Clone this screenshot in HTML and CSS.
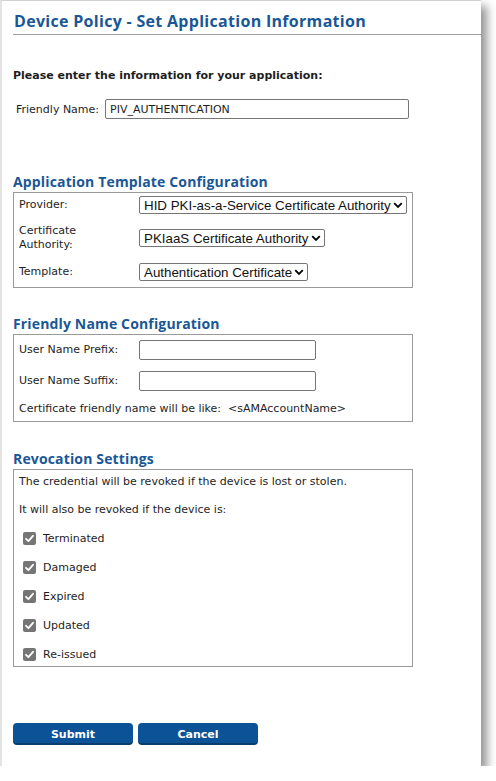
FILE: index.html
```html
<!DOCTYPE html>
<html>
<head>
<meta charset="utf-8">
<link rel="stylesheet" href="styles.css">
</head>
<body>
<div class="frame">
  <h1 class="title">Device Policy - Set Application Information</h1>
  <div class="content">
    <p class="intro">Please enter the information for your application:</p>
    <div class="name-row">
      <label class="name-label">Friendly Name:</label>
      <input class="text-input wide" type="text" value="PIV_AUTHENTICATION">
    </div>

    <h2 class="section-title s-template">Application Template Configuration</h2>
    <div class="box box-template">
      <div class="row r1">
        <span class="lbl">Provider:</span>
        <select class="sel sel-provider"><option>HID PKI-as-a-Service Certificate Authority</option></select>
      </div>
      <div class="row r2">
        <span class="lbl">Certificate<br>Authority:</span>
        <select class="sel sel-ca"><option>PKIaaS Certificate Authority</option></select>
      </div>
      <div class="row r3">
        <span class="lbl">Template:</span>
        <select class="sel sel-template"><option>Authentication Certificate</option></select>
      </div>
    </div>

    <h2 class="section-title s-friendly">Friendly Name Configuration</h2>
    <div class="box box-friendly">
      <div class="row">
        <span class="lbl">User Name Prefix:</span>
        <input class="text-input short" type="text">
      </div>
      <div class="row">
        <span class="lbl">User Name Suffix:</span>
        <input class="text-input short" type="text">
      </div>
      <div class="line">Certificate friendly name will be like:&nbsp;&nbsp;&lt;sAMAccountName&gt;</div>
    </div>

    <h2 class="section-title s-revoke">Revocation Settings</h2>
    <div class="box box-revoke">
      <div class="line">The credential will be revoked if the device is lost or stolen.</div>
      <div class="line">It will also be revoked if the device is:</div>
      <div class="check"><span class="cb"><svg viewBox="0 0 13 13" width="13" height="13"><path d="M3 6.8 L5.4 9.2 L10 3.8" fill="none" stroke="#fff" stroke-width="1.8" stroke-linecap="round" stroke-linejoin="round"/></svg></span>Terminated</div>
      <div class="check"><span class="cb"><svg viewBox="0 0 13 13" width="13" height="13"><path d="M3 6.8 L5.4 9.2 L10 3.8" fill="none" stroke="#fff" stroke-width="1.8" stroke-linecap="round" stroke-linejoin="round"/></svg></span>Damaged</div>
      <div class="check"><span class="cb"><svg viewBox="0 0 13 13" width="13" height="13"><path d="M3 6.8 L5.4 9.2 L10 3.8" fill="none" stroke="#fff" stroke-width="1.8" stroke-linecap="round" stroke-linejoin="round"/></svg></span>Expired</div>
      <div class="check"><span class="cb"><svg viewBox="0 0 13 13" width="13" height="13"><path d="M3 6.8 L5.4 9.2 L10 3.8" fill="none" stroke="#fff" stroke-width="1.8" stroke-linecap="round" stroke-linejoin="round"/></svg></span>Updated</div>
      <div class="check"><span class="cb"><svg viewBox="0 0 13 13" width="13" height="13"><path d="M3 6.8 L5.4 9.2 L10 3.8" fill="none" stroke="#fff" stroke-width="1.8" stroke-linecap="round" stroke-linejoin="round"/></svg></span>Re-issued</div>
    </div>

    <div class="buttons">
      <button class="btn">Submit</button>
      <button class="btn">Cancel</button>
    </div>
  </div>
</div>
</body>
</html>
```

FILE: styles.css
```css
html, body {
  margin: 0;
  padding: 0;
  background: #ffffff;
}
body {
  font-family: "DejaVu Sans", sans-serif;
  font-size: 11px;
  color: #1e1e1e;
}
.frame {
  box-sizing: border-box;
  width: 481px;
  height: 766px;
  background: #ffffff;
  border-top: 1px solid #d2d2d2;
  border-left: 2px solid #e4e4e4;
  box-shadow: 6px 6px 9px rgba(0, 0, 0, 0.42);
}
.title {
  margin: 0 0 0 11px;
  padding: 10px 0 3px 1px;
  font-family: "Open Sans", sans-serif;
  font-weight: 700;
  font-size: 16px;
  line-height: 20px;
  letter-spacing: 0.3px;
  color: #1a5796;
  border-bottom: 1px solid #9e9e9e;
}
.content {
  padding-left: 11px;
}
.intro {
  margin: 34px 0 0 0;
  font-weight: 700;
  line-height: 14px;
}
.name-row {
  display: flex;
  align-items: center;
  margin-top: 16px;
  padding-left: 3px;
}
.name-label {
  width: 89px;
}
.text-input {
  box-sizing: border-box;
  height: 20px;
  border: 1px solid #767676;
  border-radius: 2px;
  padding: 0 4px;
  font-family: "DejaVu Sans", sans-serif;
  font-size: 11px;
  color: #1e1e1e;
  background: #fff;
  outline: none;
}
.wide { width: 304px; }
.short { width: 177px; }

.section-title {
  margin: 0;
  font-family: "Open Sans", sans-serif;
  font-weight: 700;
  font-size: 14px;
  line-height: 18px;
  letter-spacing: 0.15px;
  color: #1a5796;
}
.s-template { margin-top: 54px; }
.s-friendly { margin-top: 27px; }
.s-revoke { margin-top: 28px; }

.box {
  box-sizing: border-box;
  width: 400px;
  border: 1px solid #9a9a9a;
  margin-top: 1px;
  padding-left: 5px;
  display: flex;
  flex-direction: column;
}
.row {
  display: flex;
  align-items: center;
}
.lbl {
  width: 120px;
  line-height: 14px;
  flex: none;
}
.line {
  line-height: 14px;
}

.box-template {
  padding-top: 3px;
  padding-bottom: 6px;
  gap: 10px;
}
.box-template .r2 { height: 28px; }
.box-template .r3 { margin-top: 1px; }

.sel {
  box-sizing: border-box;
  -webkit-appearance: none;
  appearance: none;
  height: 18px;
  border: 1px solid #767676;
  border-radius: 2px;
  padding: 0 14px 0 4px;
  font-family: "Liberation Sans", Arial, sans-serif;
  font-size: 13.33px;
  color: #111;
  background-color: #fff;
  background-image: url("data:image/svg+xml,%3Csvg xmlns='http://www.w3.org/2000/svg' width='10' height='7' viewBox='0 0 10 7'%3E%3Cpath d='M1.2 1.2 L5 5 L8.8 1.2' fill='none' stroke='%23000' stroke-width='1.8'/%3E%3C/svg%3E");
  background-repeat: no-repeat;
  background-position: right 3px center;
  outline: none;
}
.sel-provider { width: 268px; }
.sel-ca { width: 186px; }
.sel-template { width: 169px; }

.box-friendly {
  padding-top: 5px;
  padding-bottom: 5px;
  gap: 11px;
}

.box-revoke {
  padding-top: 5px;
  padding-bottom: 4px;
  gap: 14px;
}
.check {
  display: flex;
  align-items: center;
  height: 15px;
  padding-left: 4px;
}
.cb {
  display: inline-flex;
  width: 13px;
  height: 13px;
  border-radius: 2px;
  background: #757575;
  margin-right: 7px;
}

.buttons {
  display: flex;
  gap: 5px;
  margin-top: 56px;
}
.btn {
  box-sizing: border-box;
  width: 120px;
  height: 22px;
  border: none;
  border-bottom: 2px solid #0a3d6d;
  border-radius: 4px;
  background: #0c5297;
  color: #fff;
  font-family: "DejaVu Sans", sans-serif;
  font-weight: 700;
  font-size: 11px;
  padding: 2px 0 0 0;
}
```
